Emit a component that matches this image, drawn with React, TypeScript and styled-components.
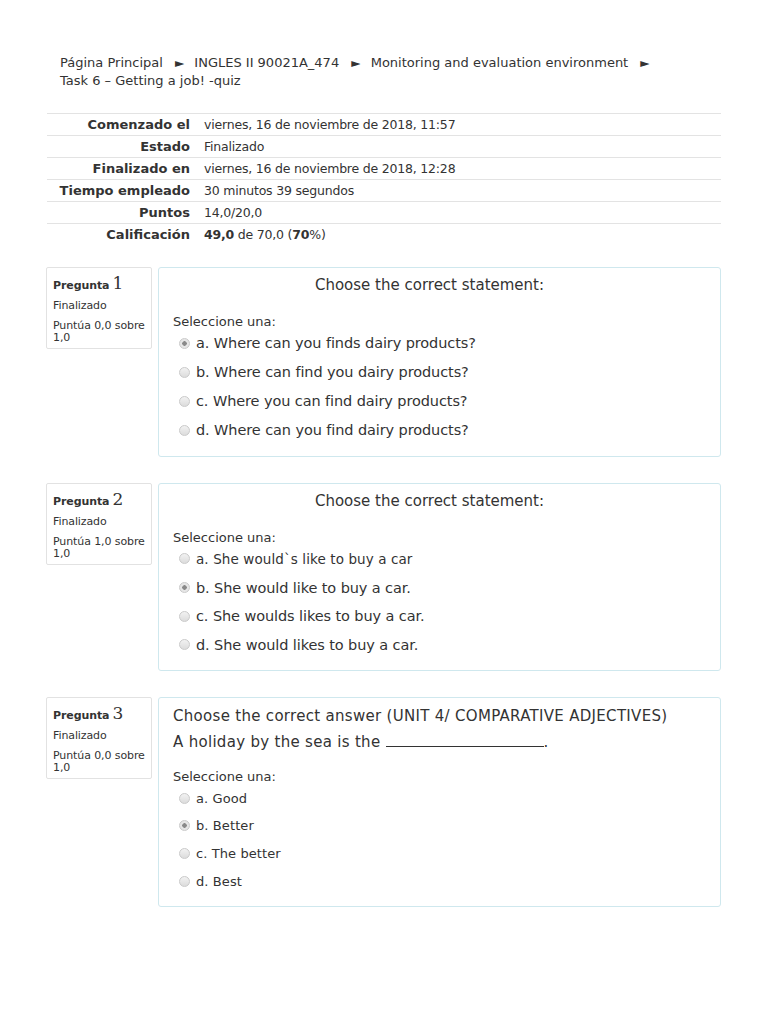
import React from 'react'
import styled, { createGlobalStyle } from 'styled-components'

const GlobalStyle = createGlobalStyle`
  body {
    margin: 0;
    background: #fff;
    color: #333;
    font-family: "DejaVu Sans", Verdana, sans-serif;
  }
`

const Page = styled.div`
  width: 675px;
  padding: 54px 0 40px 46px;
`

const Breadcrumb = styled.div`
  margin-left: 14px;
  font-size: 13px;
  line-height: 18px;
  color: #333;
`

const Sep = styled.span`
  font-size: 12px;
  margin: 0 6px 0 8px;
`

const Summary = styled.table`
  margin-top: 23px;
  width: 674px;
  margin-left: 1px;
  border-collapse: collapse;
`

const Row = styled.tr`
  height: 22px;
  border-top: 1px solid #e3e3e3;
`

const Label = styled.th`
  width: 136px;
  padding: 0 7px;
  text-align: right;
  font-size: 13px;
  font-weight: bold;
  white-space: nowrap;
`

const Value = styled.td`
  padding: 0 7px;
  text-align: left;
  font-size: 12.5px;
  letter-spacing: -0.2px;
`

const Questions = styled.div`
  margin-top: 21px;
  display: flex;
  flex-direction: column;
  gap: 26px;
`

const Question = styled.div`
  display: flex;
  align-items: flex-start;
  gap: 6px;
`

const Info = styled.div`
  width: 94px;
  padding: 5px 4px 4px 6px;
  border: 1px solid #e2e2e2;
  border-radius: 2px;
  background: #fff;
  font-size: 11px;
  line-height: 12px;
  letter-spacing: -0.1px;
`

const InfoTitle = styled.div`
  font-weight: bold;
  line-height: 20px;
  display: flex;
  align-items: baseline;
  gap: 3px;
`

const Num = styled.span`
  font-family: "DejaVu Serif", "Liberation Serif", serif;
  font-weight: normal;
  font-size: 17px;
`

const InfoLine = styled.div<{ $gap: number }>`
  margin-top: ${(p) => p.$gap}px;
`

const Content = styled.div`
  flex: 1;
  border: 1px solid #cfe8ee;
  border-radius: 3px;
  padding: 5px 14px 11px;
`

const Title = styled.div`
  text-align: center;
  padding-right: 20px;
  font-size: 15px;
  line-height: 24px;
`

const LongTitle = styled.div`
  font-size: 15px;
  letter-spacing: 0.3px;
  line-height: 26px;
`

const Prompt = styled.div<{ $gap: number }>`
  font-size: 13px;
  line-height: 14px;
  margin-top: ${(p) => p.$gap}px;
`

const Option = styled.div<{ $size: number; $h: number }>`
  display: flex;
  align-items: center;
  height: ${(p) => p.$h}px;
  padding-left: 6px;
  font-size: ${(p) => p.$size}px;
  letter-spacing: ${(p) => (p.$size > 14 ? '-0.1px' : '0.1px')};
`

const Radio = styled.span<{ $checked: boolean }>`
  width: 9px;
  height: 9px;
  border-radius: 50%;
  border: 1px solid #cacaca;
  background: ${(p) =>
    p.$checked
      ? 'radial-gradient(circle, #8a8a8a 0 2px, #e6e6e6 2.5px)'
      : 'linear-gradient(#f2f2f2, #dcdcdc)'};
  margin-right: 6px;
  flex-shrink: 0;
`

const Blank = styled.span`
  display: inline-block;
  width: 158px;
  border-bottom: 1px solid #333;
`

type Opt = { text: string; size: number; checked?: boolean }

const summary: [string, React.ReactNode][] = [
  ['Comenzado el', 'viernes, 16 de noviembre de 2018, 11:57'],
  ['Estado', 'Finalizado'],
  ['Finalizado en', 'viernes, 16 de noviembre de 2018, 12:28'],
  ['Tiempo empleado', '30 minutos 39 segundos'],
  ['Puntos', '14,0/20,0'],
  [
    'Calificación',
    <>
      <b>49,0</b> de 70,0 (<b>70</b>%)
    </>,
  ],
]

function QuestionBlock({
  n,
  score,
  title,
  promptGap,
  options,
  rowH,
}: {
  n: number
  score: string
  title: React.ReactNode
  promptGap: number
  options: Opt[]
  rowH: number
}) {
  return (
    <Question>
      <Info>
        <InfoTitle>
          Pregunta <Num>{n}</Num>
        </InfoTitle>
        <InfoLine $gap={4}>Finalizado</InfoLine>
        <InfoLine $gap={8}>{score}</InfoLine>
      </Info>
      <Content>
        {title}
        <Prompt $gap={promptGap}>Seleccione una:</Prompt>
        {options.map((o) => (
          <Option key={o.text} $size={o.size} $h={rowH}>
            <Radio $checked={!!o.checked} />
            {o.text}
          </Option>
        ))}
      </Content>
    </Question>
  )
}

export default function App() {
  return (
    <>
      <GlobalStyle />
      <Page>
        <Breadcrumb>
          Página Principal <Sep>►</Sep> INGLES II 90021A_474 <Sep>►</Sep>{' '}
          Monitoring and evaluation environment <Sep>►</Sep>
          <br />
          Task 6 – Getting a job! -quiz
        </Breadcrumb>
        <Summary>
          <tbody>
            {summary.map(([k, v]) => (
              <Row key={k}>
                <Label>{k}</Label>
                <Value>{v}</Value>
              </Row>
            ))}
          </tbody>
        </Summary>
        <Questions>
          <QuestionBlock
            n={1}
            score="Puntúa 0,0 sobre 1,0"
            title={<Title>Choose the correct statement:</Title>}
            promptGap={18}
            rowH={29}
            options={[
              { text: 'a. Where can you finds dairy products?', size: 14.5, checked: true },
              { text: 'b. Where can find you dairy products?', size: 14.5 },
              { text: 'c. Where you can find dairy products?', size: 14.5 },
              { text: 'd. Where can you find dairy products?', size: 14.5 },
            ]}
          />
          <QuestionBlock
            n={2}
            score="Puntúa 1,0 sobre 1,0"
            title={<Title>Choose the correct statement:</Title>}
            promptGap={18}
            rowH={28.7}
            options={[
              { text: 'a. She would`s like to buy a car', size: 13.5 },
              { text: 'b. She would like to buy a car.', size: 14.5, checked: true },
              { text: 'c. She woulds likes to buy a car.', size: 14.5 },
              { text: 'd. She would likes to buy a car.', size: 14.5 },
            ]}
          />
          <QuestionBlock
            n={3}
            score="Puntúa 0,0 sobre 1,0"
            title={
              <>
                <LongTitle>Choose the correct answer (UNIT 4/ COMPARATIVE ADJECTIVES)</LongTitle>
                <LongTitle>
                  A holiday by the sea is the <Blank />.
                </LongTitle>
              </>
            }
            promptGap={15}
            rowH={27.7}
            options={[
              { text: 'a. Good', size: 13 },
              { text: 'b. Better', size: 13, checked: true },
              { text: 'c. The better', size: 13 },
              { text: 'd. Best', size: 13 },
            ]}
          />
        </Questions>
      </Page>
    </>
  )
}
